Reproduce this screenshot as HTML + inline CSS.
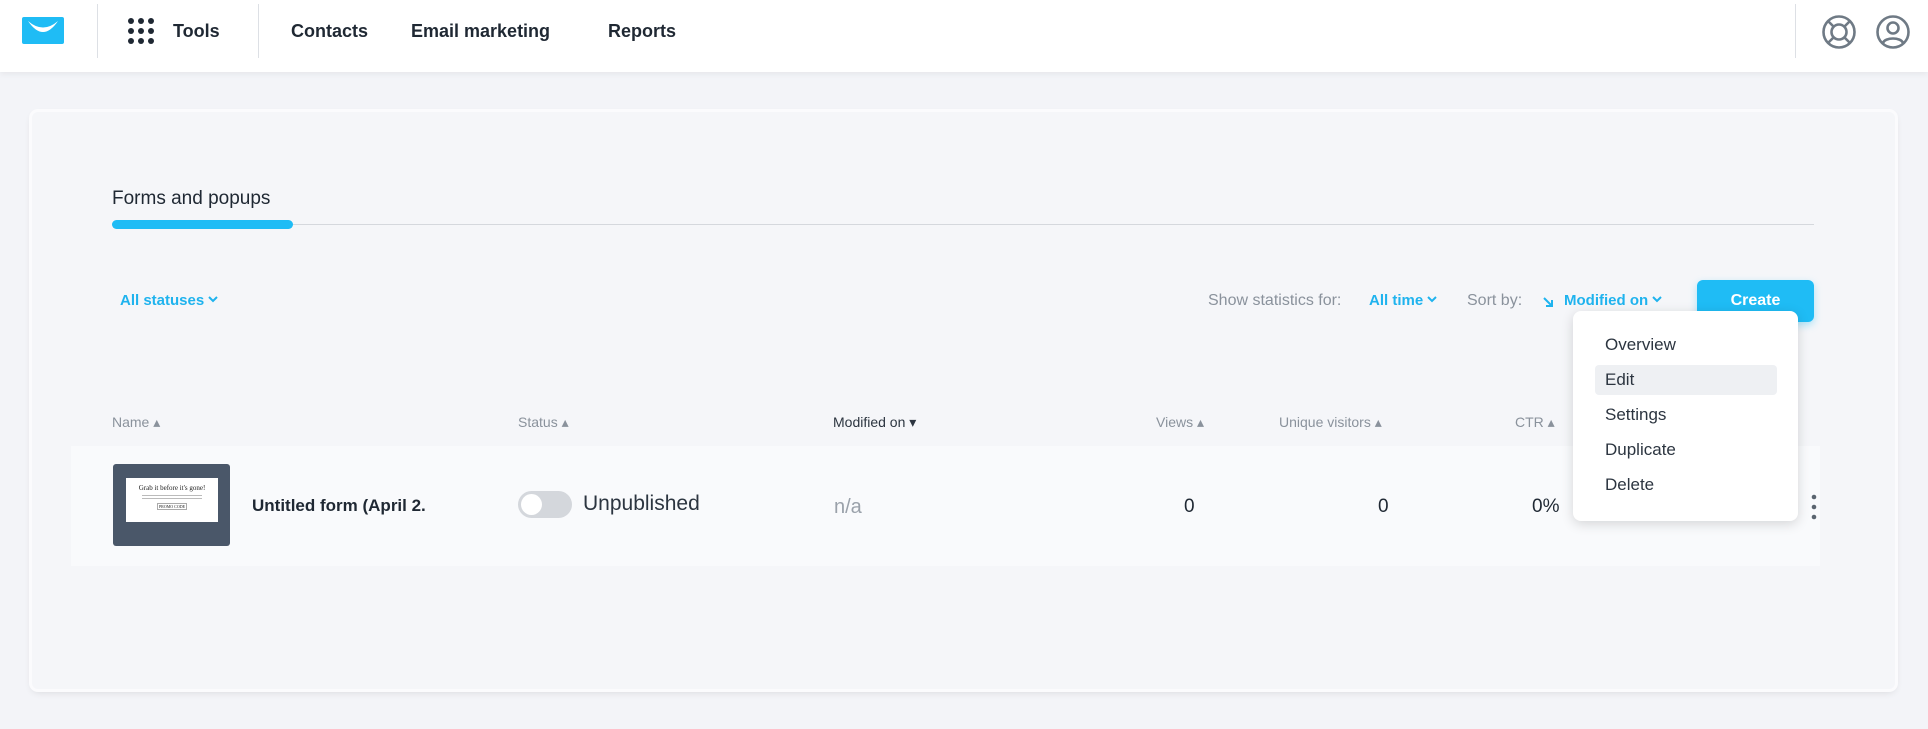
<!DOCTYPE html>
<html><head><meta charset="utf-8"><style>
*{margin:0;padding:0;box-sizing:border-box}
body{width:1928px;height:729px;background:#f3f4f8;font-family:"Liberation Sans",sans-serif;position:relative;overflow:hidden;color:#1f2833}
.a{position:absolute;white-space:nowrap}
.hdr{position:absolute;left:0;top:0;width:1928px;height:72px;background:#fff;box-shadow:0 2px 6px rgba(0,0,0,.06)}
.nav{font-size:18px;font-weight:bold;top:21px}
.vd{position:absolute;width:1px;background:#dde0e5;top:4px;height:54px}
.card{position:absolute;left:32px;top:112px;width:1863px;height:577px;background:#f5f6f9;border-radius:6px;box-shadow:0 0 0 3px #fbfbfd,0 3px 8px rgba(0,0,0,.12)}
.blue{color:#1fb3ee;font-weight:bold}
.gray{color:#8a929c}
.th{font-size:14px;top:414px;color:#8a929c}
.mi{font-size:17px;color:#2c3540;left:32px}
.cv{display:inline-block;vertical-align:middle;margin-left:4px;margin-top:-3px}
</style></head><body>
<div class="hdr">
 <svg class="a" style="left:22px;top:17px" width="42" height="27" viewBox="0 0 42 27"><rect width="42" height="27" rx="2" fill="#1fbcf5"/><path d="M6 4 Q21 26 36 4 Q21 17 6 4Z" fill="#fff"/></svg>
 <div class="vd" style="left:97px"></div>
 <svg class="a" style="left:127px;top:17px" width="28" height="28">
  <g fill="#1f2833"><circle cx="4" cy="4" r="3"/><circle cx="14" cy="4" r="3"/><circle cx="24" cy="4" r="3"/><circle cx="4" cy="14" r="3"/><circle cx="14" cy="14" r="3"/><circle cx="24" cy="14" r="3"/><circle cx="4" cy="24" r="3"/><circle cx="14" cy="24" r="3"/><circle cx="24" cy="24" r="3"/></g></svg>
 <div class="a nav" style="left:173px">Tools</div>
 <div class="vd" style="left:258px"></div>
 <div class="a nav" style="left:291px">Contacts</div>
 <div class="a nav" style="left:411px">Email marketing</div>
 <div class="a nav" style="left:608px">Reports</div>
 <div class="vd" style="left:1795px"></div>
 <svg class="a" style="left:1821px;top:14px" width="36" height="36" viewBox="0 0 36 36" fill="none" stroke="#6f7a85" stroke-width="2.6"><circle cx="18" cy="18" r="15.5"/><circle cx="18" cy="18" r="7.5"/><path d="M7 7l6 6M29 7l-6 6M7 29l6-6M29 29l-6-6"/></svg>
 <svg class="a" style="left:1875px;top:14px" width="36" height="36" viewBox="0 0 36 36" fill="none" stroke="#6f7a85" stroke-width="2.6"><circle cx="18" cy="18" r="15.5"/><circle cx="18" cy="14" r="5.5"/><path d="M8 29c2-6 18-6 20 0"/></svg>
</div>
<div class="card"></div>
<div class="a" style="left:112px;top:188px;font-size:19px;color:#1f2833">Forms and popups</div>
<div class="a" style="left:112px;top:224px;width:1702px;height:1px;background:#d5d8dd"></div>
<div class="a" style="left:112px;top:220px;width:181px;height:9px;border-radius:5px;background:#1fbcf5"></div>
<div class="a blue" style="left:120px;top:292px;font-size:15px">All statuses<svg class="cv" width="10" height="7"><path d="M1 1l4 4 4-4" stroke="#1fb3ee" stroke-width="2" fill="none"/></svg></div>
<div class="a gray" style="left:1208px;top:292px;font-size:16px">Show statistics for:</div>
<div class="a blue" style="left:1369px;top:292px;font-size:15px">All time<svg class="cv" width="10" height="7"><path d="M1 1l4 4 4-4" stroke="#1fb3ee" stroke-width="2" fill="none"/></svg></div>
<div class="a gray" style="left:1467px;top:292px;font-size:16px">Sort by:</div>
<svg class="a" style="left:1543px;top:297px" width="11" height="11"><path d="M1 1l8 8M3 9h6V3" stroke="#1fb3ee" stroke-width="2" fill="none"/></svg>
<div class="a blue" style="left:1564px;top:292px;font-size:15px">Modified on<svg class="cv" width="10" height="7"><path d="M1 1l4 4 4-4" stroke="#1fb3ee" stroke-width="2" fill="none"/></svg></div>
<div class="a" style="left:1697px;top:280px;width:117px;height:42px;border-radius:6px;background:#1fbcf5;color:#fff;font-weight:bold;font-size:16px;text-align:center;line-height:42px;box-shadow:0 3px 8px rgba(31,188,245,.35)">Create</div>
<div class="a th" style="left:112px">Name ▴</div>
<div class="a th" style="left:518px">Status ▴</div>
<div class="a th" style="left:833px;color:#2c3540">Modified on ▾</div>
<div class="a th" style="left:1156px">Views ▴</div>
<div class="a th" style="left:1279px">Unique visitors ▴</div>
<div class="a th" style="left:1515px">CTR ▴</div>
<div class="a" style="left:71px;top:446px;width:1749px;height:120px;background:#f9fafc"></div>
<div class="a" style="left:113px;top:464px;width:117px;height:82px;background:#4a5769;border-radius:3px"></div>
<div class="a" style="left:126px;top:478px;width:92px;height:44px;background:#fff;font-family:'Liberation Serif',serif;font-size:7px;text-align:center;padding-top:6px;color:#222">Grab it before it's gone!<div style="margin:3px auto 0;width:60px;height:4px;border-top:1px solid #bbb;border-bottom:1px solid #bbb"></div><div style="margin:4px auto 0;width:30px;border:1px solid #aaa;font-size:4px">PROMO CODE</div></div>
<div class="a" style="left:252px;top:496px;font-size:17px;font-weight:bold">Untitled form (April 2.</div>
<div class="a" style="left:518px;top:491px;width:54px;height:27px;border-radius:14px;background:#d4d7dc"><div style="position:absolute;left:3px;top:3px;width:21px;height:21px;border-radius:50%;background:#fff"></div></div>
<div class="a" style="left:583px;top:492px;font-size:21px;color:#2c3540">Unpublished</div>
<div class="a" style="left:834px;top:496px;font-size:20px;color:#9aa1aa">n/a</div>
<div class="a" style="left:1184px;top:496px;font-size:19px">0</div>
<div class="a" style="left:1378px;top:496px;font-size:19px">0</div>
<div class="a" style="left:1532px;top:496px;font-size:19px">0%</div>
<svg class="a" style="left:1810px;top:494px" width="8" height="26"><g fill="#5b6570"><circle cx="4" cy="3" r="2.3"/><circle cx="4" cy="13" r="2.3"/><circle cx="4" cy="23" r="2.3"/></g></svg>
<div class="a" style="left:1573px;top:311px;width:225px;height:210px;background:#fff;border-radius:8px;box-shadow:0 3px 12px rgba(0,0,0,.15)">
 <div class="a" style="left:22px;top:54px;width:182px;height:30px;border-radius:4px;background:#eef0f3"></div>
 <div class="a mi" style="top:24px">Overview</div>
 <div class="a mi" style="top:59px">Edit</div>
 <div class="a mi" style="top:94px">Settings</div>
 <div class="a mi" style="top:129px">Duplicate</div>
 <div class="a mi" style="top:164px">Delete</div>
</div>
</body></html>
